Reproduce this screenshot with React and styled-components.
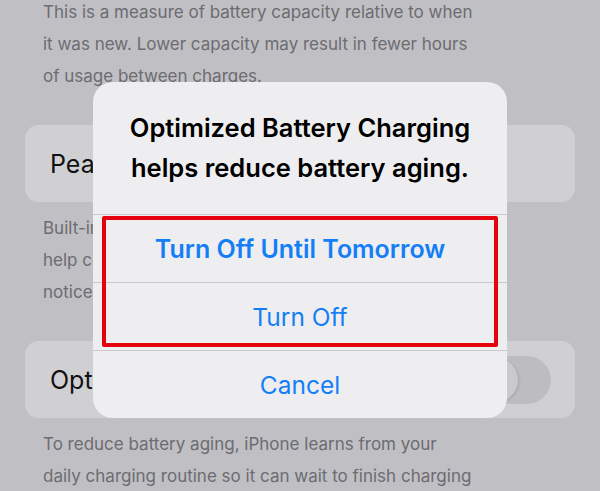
import React from 'react'
import styled, { createGlobalStyle } from 'styled-components'

const GlobalStyle = createGlobalStyle`
  html, body {
    margin: 0;
    padding: 0;
    background: #c0bfc4;
  }
  body {
    font-family: Inter, "Noto Sans", "Liberation Sans", sans-serif;
    overflow: hidden;
  }
`

function Toggle({ on }) {
  return (
    <Track on={on ? 1 : 0}>
      <Knob on={on ? 1 : 0} />
    </Track>
  )
}

function Lines({ lines }) {
  return (
    <Note>
      {lines.map((l, i) => (
        <span key={i}>
          {l}
          {i < lines.length - 1 && <br />}
        </span>
      ))}
    </Note>
  )
}

function App() {
  return (
    <>
      <GlobalStyle />
      <Screen>
        <Settings>
          <Lines
            lines={[
              'This is a measure of battery capacity relative to when',
              'it was new. Lower capacity may result in fewer hours',
              'of usage between charges.',
            ]}
          />
          <Card>
            <Label>Peak Performance Capability</Label>
          </Card>
          <Lines
            lines={[
              'Built-in dynamic software and hardware systems will',
              'help counter performance impacts that may be',
              'noticed as your iPhone battery chemically ages.',
            ]}
          />
          <Card>
            <Label>Optimized Battery Charging</Label>
            <Toggle on={false} />
          </Card>
          <Lines
            lines={[
              'To reduce battery aging, iPhone learns from your',
              'daily charging routine so it can wait to finish charging',
            ]}
          />
        </Settings>

        <Alert>
          <Title>
            Optimized Battery Charging
            <br />
            helps reduce battery aging.
          </Title>
          <Action bold>Turn Off Until Tomorrow</Action>
          <Action>Turn Off</Action>
          <Action>Cancel</Action>
          <Highlight />
        </Alert>
      </Screen>
    </>
  )
}

export default App

const Screen = styled.div`
  position: relative;
  width: 600px;
  height: 491px;
  overflow: hidden;
  background: #c0bfc4;
`

const Settings = styled.div`
  display: flex;
  flex-direction: column;
  padding: 0 25px;
  margin-top: -4px;
`

const Note = styled.p`
  margin: 0;
  padding: 0 18px;
  font-size: 17px;
  line-height: 32px;
  color: #6c6c71;
  white-space: nowrap;

  & + div {
    margin-top: 33px;
  }
`

const Card = styled.div`
  height: 77px;
  border-radius: 14px;
  background: #d0d0d2;
  display: flex;
  align-items: center;
  justify-content: space-between;
  padding: 0 24px 0 25px;
  margin-bottom: 10px;
`

const Label = styled.span`
  font-size: 25px;
  color: #111113;
  white-space: nowrap;
`

const Track = styled.div`
  width: 79px;
  height: 48px;
  border-radius: 24px;
  background: ${(p) => (p.on ? '#5fb870' : '#bdbdc0')};
  padding: 2px;
  box-sizing: border-box;
  display: flex;
  flex-shrink: 0;
  justify-content: ${(p) => (p.on ? 'flex-end' : 'flex-start')};
`

const Knob = styled.div`
  width: 44px;
  height: 44px;
  border-radius: 50%;
  background: #cacacc;
  box-shadow: 1px 1px 3px rgba(0, 0, 0, 0.12);
`

const Alert = styled.div`
  position: absolute;
  left: 93px;
  top: 82px;
  width: 414px;
  height: 336px;
  border-radius: 20px;
  background: #eeeef0;
  display: flex;
  flex-direction: column;
  overflow: hidden;
`

const Title = styled.div`
  height: 132px;
  display: flex;
  align-items: center;
  justify-content: center;
  text-align: center;
  font-size: 25.5px;
  font-weight: 600;
  line-height: 40px;
  color: #000;
  white-space: nowrap;
`

const Action = styled.div`
  height: 68px;
  border-top: 1px solid #c9c9cc;
  box-sizing: border-box;
  display: flex;
  align-items: center;
  justify-content: center;
  font-size: ${(p) => (p.bold ? '25px' : '24.5px')};
  font-weight: ${(p) => (p.bold ? 600 : 400)};
  color: #147ef6;
  white-space: nowrap;
`

const Highlight = styled.div`
  position: absolute;
  left: 9px;
  top: 134px;
  width: 396px;
  height: 131px;
  box-sizing: border-box;
  border: 4px solid #e5000d;
  border-radius: 2px;
  pointer-events: none;
`
